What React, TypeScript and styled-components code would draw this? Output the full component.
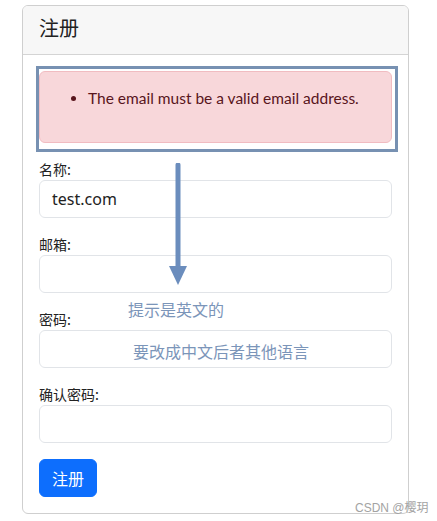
import React from "react";
import styled, { createGlobalStyle } from "styled-components";

const Global = createGlobalStyle`
  html, body { margin: 0; padding: 0; background: #fff; }
  body { font-family: "Noto Sans", "Noto Sans CJK SC", sans-serif; color: #212529; }
  * { box-sizing: border-box; }
`;

const Page = styled.div`
  position: relative;
  width: 437px;
  height: 521px;
  padding: 5px 0 0 22px;
`;

const Card = styled.div`
  width: 387px;
  border: 1px solid #cfcfcf;
  border-radius: 6px;
  overflow: hidden;
`;

const CardHeader = styled.div`
  height: 49px;
  padding: 0 16px 5px;
  display: flex;
  align-items: center;
  background: #f7f7f7;
  border-bottom: 1px solid #d4d4d4;
  font-family: "Noto Sans CJK SC", sans-serif;
  font-size: 20px;
  color: #222;
`;

const CardBody = styled.div`
  position: relative;
  padding: 16px;
  display: flex;
  flex-direction: column;
`;

const AlertWrap = styled.div`
  position: relative;
  margin-bottom: 16px;
`;

const Alert = styled.div`
  background: #f8d7da;
  border: 1px solid #f1bcc1;
  border-radius: 6px;
  padding: 14px 16px 16px;
  color: #58151c;
  font-family: "Lato", "Noto Sans", sans-serif;
  font-size: 15.5px;
  line-height: 24px;
`;

const List = styled.ul`
  margin: 0 0 16px;
  padding-left: 32px;
`;

const Highlight = styled.div`
  position: absolute;
  top: -5px;
  left: -3px;
  right: -6px;
  bottom: -9px;
  border: 3px solid #7791b2;
  pointer-events: none;
`;

const Field = styled.div`
  display: flex;
  flex-direction: column;
  margin-bottom: 16px;
`;

const Label = styled.label`
  font-family: "Noto Sans CJK SC", sans-serif;
  font-size: 14px;
  line-height: 21px;
  color: #222;
`;

const Input = styled.div`
  height: 38px;
  border: 1px solid #e1e4e8;
  border-radius: 6px;
  padding: 0 12px;
  display: flex;
  align-items: center;
  font-size: 16px;
  color: #222;
`;

const Button = styled.button`
  align-self: flex-start;
  height: 38px;
  padding: 0 12px;
  border: 1px solid #0d6efd;
  border-radius: 6px;
  background: #0d6efd;
  color: #fff;
  font-family: "Noto Sans CJK SC", sans-serif;
  font-size: 16px;
`;

const Note = styled.div<{ $top: number; $left: number }>`
  position: absolute;
  top: ${(p) => p.$top}px;
  left: ${(p) => p.$left}px;
  font-family: "Noto Sans CJK SC", sans-serif;
  font-size: 16px;
  line-height: 20px;
  color: #7b95b9;
  white-space: nowrap;
`;

const Arrow = styled.svg`
  position: absolute;
  left: 145px;
  top: 108px;
`;

const Watermark = styled.div`
  position: absolute;
  left: 355px;
  top: 498px;
  font-family: "Liberation Sans", "Noto Sans CJK SC", sans-serif;
  font-size: 12px;
  color: #a3a3a3;
  white-space: nowrap;
`;

export default function App() {
  const fields: { label: string; value?: string }[] = [
    { label: "名称:", value: "test.com" },
    { label: "邮箱:" },
    { label: "密码:" },
    { label: "确认密码:" },
  ];
  return (
    <Page>
      <Global />
      <Card>
        <CardHeader>注册</CardHeader>
        <CardBody>
          <AlertWrap>
            <Alert>
              <List>
                <li>The email must be a valid email address.</li>
              </List>
            </Alert>
            <Highlight />
          </AlertWrap>
          {fields.map((f) => (
            <Field key={f.label}>
              <Label>{f.label}</Label>
              <Input>{f.value}</Input>
            </Field>
          ))}
          <Button>注册</Button>
          <Arrow width="20" height="124" viewBox="0 0 20 124">
            <line x1="10" y1="2" x2="10" y2="108" stroke="#6b8dbd" strokeWidth="5" strokeLinecap="round" />
            <polygon points="1,103 19,103 10,122" fill="#6b8dbd" />
          </Arrow>
          <Note $top={244} $left={105}>提示是英文的</Note>
          <Note $top={286} $left={110}>要改成中文后者其他语言</Note>
        </CardBody>
      </Card>
      <Watermark>CSDN @樱玥</Watermark>
    </Page>
  );
}
